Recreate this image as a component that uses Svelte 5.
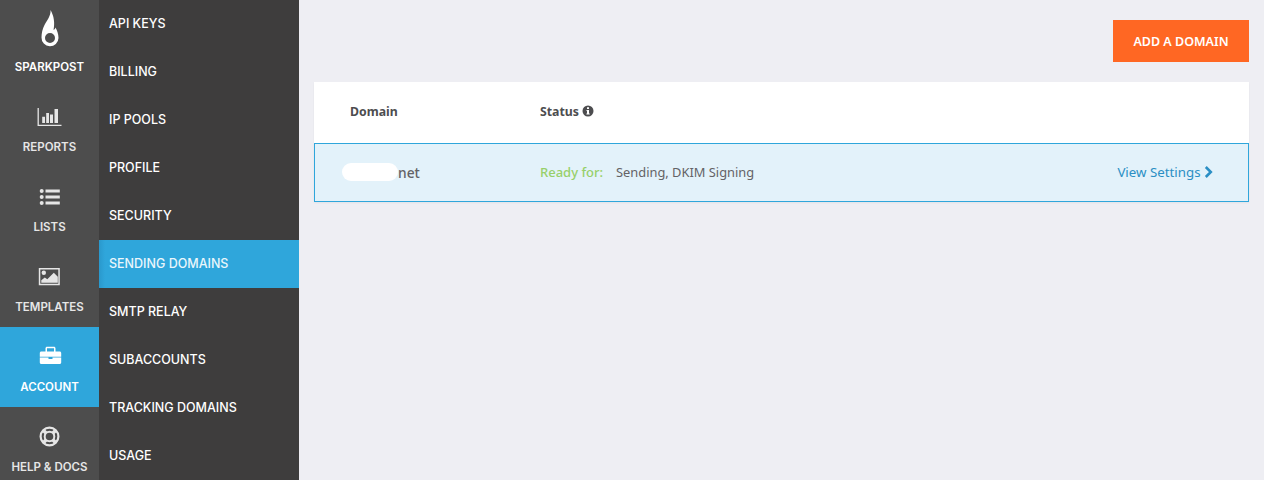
<script>
	const mainNav = [
		{ label: 'REPORTS', icon: 'reports' },
		{ label: 'LISTS', icon: 'lists' },
		{ label: 'TEMPLATES', icon: 'templates' },
		{ label: 'ACCOUNT', icon: 'account', active: true },
		{ label: 'HELP & DOCS', icon: 'help' }
	];

	const subNav = [
		'API KEYS',
		'BILLING',
		'IP POOLS',
		'PROFILE',
		'SECURITY',
		'SENDING DOMAINS',
		'SMTP RELAY',
		'SUBACCOUNTS',
		'TRACKING DOMAINS',
		'USAGE'
	];
</script>

<div class="page">
	<nav class="main-nav">
		<div class="brand">
			<svg width="18" height="37" viewBox="0 0 18 37">
				<path fill="#fff" fill-rule="evenodd" d="M9.500 0C10 6 6 10 3.500 15 1.500 19 .5 23 .5 27.500a8.500 8.500 0 0 0 17 .5c0-4-1.500-8-3-10.500-.5 1.500-1 2-2 2.500C14 13 13 6 9.500 0zM9 23a5 5 0 1 1 0 10 5 5 0 0 1 0-10z" />
			</svg>
			<span>SPARKPOST</span>
		</div>
		{#each mainNav as item}
			<div class="main-item" class:active={item.active}>
				<svg class="icon" width="26" height="24" viewBox="0 0 26 24">
					{#if item.icon === 'reports'}
						<path fill="none" stroke="currentColor" stroke-width="1.300" d="M1.200 4v17.300H24.500" />
						<path fill="currentColor" d="M5.200 12.700h2.800V19H5.200zM9.200 9h2.800v10H9.200zM13 10.500h3V19h-3zM17.500 5H21v14h-3.500z" />
					{:else if item.icon === 'lists'}
						<path fill="currentColor" d="M8.500 5.500h14.300v3H8.500zM8.500 11.500h14.300v3H8.500zM8.500 17.500h14.300v3H8.500z" />
						<circle cx="4.700" cy="7" r="2" fill="currentColor" />
						<circle cx="4.700" cy="13" r="2" fill="currentColor" />
						<circle cx="4.700" cy="19" r="2" fill="currentColor" />
					{:else if item.icon === 'templates'}
						<path fill="currentColor" fill-rule="evenodd" d="M1.800 4h21v17.300h-21zM3.300 5.500v14.300h18V5.500z" />
						<circle cx="6.800" cy="8.700" r="2.200" fill="currentColor" />
						<path fill="currentColor" d="M4.300 18.700v-2.500l3.500-2.700 2.500 1.700 6.500-6.500 4 4v6z" />
					{:else if item.icon === 'account'}
						<path fill="currentColor" fill-rule="evenodd" d="M8.500 7.500V4.200c0-.9.700-1.500 1.500-1.500h7c.8 0 1.500.6 1.500 1.500v3.300h4.200c.8 0 1.500.7 1.500 1.500v3.700H2.800V9c0-.8.7-1.500 1.500-1.500zM10 4.200v3.300h7V4.200z" />
						<path fill="currentColor" d="M2.800 13.600h8.700v1.400h4v-1.400h8.700v5c0 .8-.7 1.500-1.500 1.500H4.300c-.8 0-1.500-.7-1.500-1.500z" />
					{:else}
						<g fill="none" stroke="currentColor">
							<circle cx="12.500" cy="12.500" r="8.900" stroke-width="2.200" />
							<circle cx="12.500" cy="12.500" r="4.800" stroke-width="2" />
							<path stroke-width="3.600" d="M6 6l3 3M19 6l-3 3M6 19l3-3M19 19l-3-3" />
						</g>
					{/if}
				</svg>
				<span>{item.label}</span>
			</div>
		{/each}
	</nav>

	<nav class="sub-nav">
		{#each subNav as label}
			<div class="sub-item" class:current={label === 'SENDING DOMAINS'}>{label}</div>
		{/each}
	</nav>

	<main class="content">
		<div class="actions">
			<button class="add">ADD A DOMAIN</button>
		</div>
		<section class="card">
			<div class="head">
				<div class="col-domain">Domain</div>
				<div class="col-status">
					Status
					<svg width="12" height="12" viewBox="0 0 12 12">
						<circle cx="6" cy="6" r="5.500" fill="#4d4d4f" />
						<path fill="#fff" d="M5 2.300h2v1.800H5zM4.500 5h2.500v3.600h.7v1H4.400v-1H5V6h-.5z" />
					</svg>
				</div>
			</div>
			<div class="row">
				<div class="col-domain name"><span class="blot"></span>net</div>
				<div class="col-status ready">
					<span class="ready-label">Ready for:</span>
					<span>Sending, DKIM Signing</span>
				</div>
				<a class="view" href="#settings">
					View Settings
					<svg width="9" height="12" viewBox="0 0 9 12">
						<path fill="none" stroke="currentColor" stroke-width="2.600" d="M1.800 1l5 5-5 5" />
					</svg>
				</a>
			</div>
		</section>
	</main>
</div>

<style>
	:global(body) {
		background-color: #eeeef3;
		overflow: hidden;
	}

	.page {
		display: flex;
		height: 480px;
		overflow: hidden;
	}

	.main-nav {
		width: 99px;
		flex: none;
		background-color: #4d4d4d;
		color: #e6e6e6;
		font-family: Inter, 'Liberation Sans', sans-serif;
		font-size: 11.500px;
		font-weight: 600;
	}

	.brand {
		height: 87px;
		display: flex;
		flex-direction: column;
		align-items: center;
		padding-top: 10px;
		box-sizing: border-box;
		color: #fff;
	}

	.brand span {
		margin-top: 12px;
		line-height: 16px;
	}

	.main-item {
		height: 80px;
		box-sizing: border-box;
		padding-top: 17px;
		display: flex;
		flex-direction: column;
		align-items: center;
	}

	.main-item span {
		margin-top: 11px;
		line-height: 16px;
		white-space: nowrap;
	}

	.main-item.active {
		background-color: #2fa6db;
		color: #fff;
	}

	.sub-nav {
		width: 200px;
		flex: none;
		background-color: #3e3d3d;
		font-family: Inter, 'Liberation Sans', sans-serif;
		font-size: 12.500px;
		font-weight: 500;
		color: #fff;
	}

	.sub-item {
		height: 48px;
		line-height: 48px;
		padding-left: 10px;
	}

	.sub-item.current {
		background: linear-gradient(to right, #2a98cc, #2fa6db 6px);
		color: #eaf6fb;
	}

	.content {
		flex: 1;
		padding: 20px 15px 0;
		font-family: 'Noto Sans', 'Open Sans', sans-serif;
		font-size: 12.850px;
		color: #636366;
	}

	.actions {
		display: flex;
		justify-content: flex-end;
		margin-bottom: 20px;
	}

	.add {
		width: 136px;
		height: 42px;
		padding: 0;
		border: 0;
		background-color: #ff6723;
		color: #fff;
		font-family: 'Noto Sans', 'Open Sans', sans-serif;
		font-size: 12.500px;
		font-weight: 600;
	}

	.card {
		background-color: #fff;
		box-shadow: 0 1px 2px rgba(0, 0, 0, 0.05);
	}

	.head {
		display: flex;
		align-items: center;
		height: 59px;
		padding-bottom: 2px;
		font-weight: 700;
		font-size: 12.300px;
		color: #4d4d4f;
	}

	.head .col-domain {
		width: 190px;
		padding-left: 36px;
		flex: none;
	}

	.head svg {
		vertical-align: -1px;
	}

	.row {
		display: flex;
		align-items: center;
		height: 59px;
		padding-bottom: 1px;
		box-sizing: border-box;
		border: 1px solid #2fa6db;
		background-color: #e3f2fa;
	}

	.row .col-domain {
		width: 225px;
		flex: none;
		padding-left: 27px;
		box-sizing: border-box;
	}

	.name {
		display: flex;
		align-items: center;
		font-size: 13.800px;
		font-weight: 500;
	}

	.blot {
		width: 56px;
		height: 18px;
		border-radius: 9px;
		background-color: #fff;
	}

	.ready {
		flex: 1;
		display: flex;
		gap: 13px;
	}

	.ready-label {
		color: #97d06a;
		font-size: 13px;
		font-weight: 500;
	}

	.view {
		margin-right: 35px;
		color: #2b8fc4;
		font-size: 13.300px;
		text-decoration: none;
	}

	.view svg {
		vertical-align: -1px;
	}
</style>
